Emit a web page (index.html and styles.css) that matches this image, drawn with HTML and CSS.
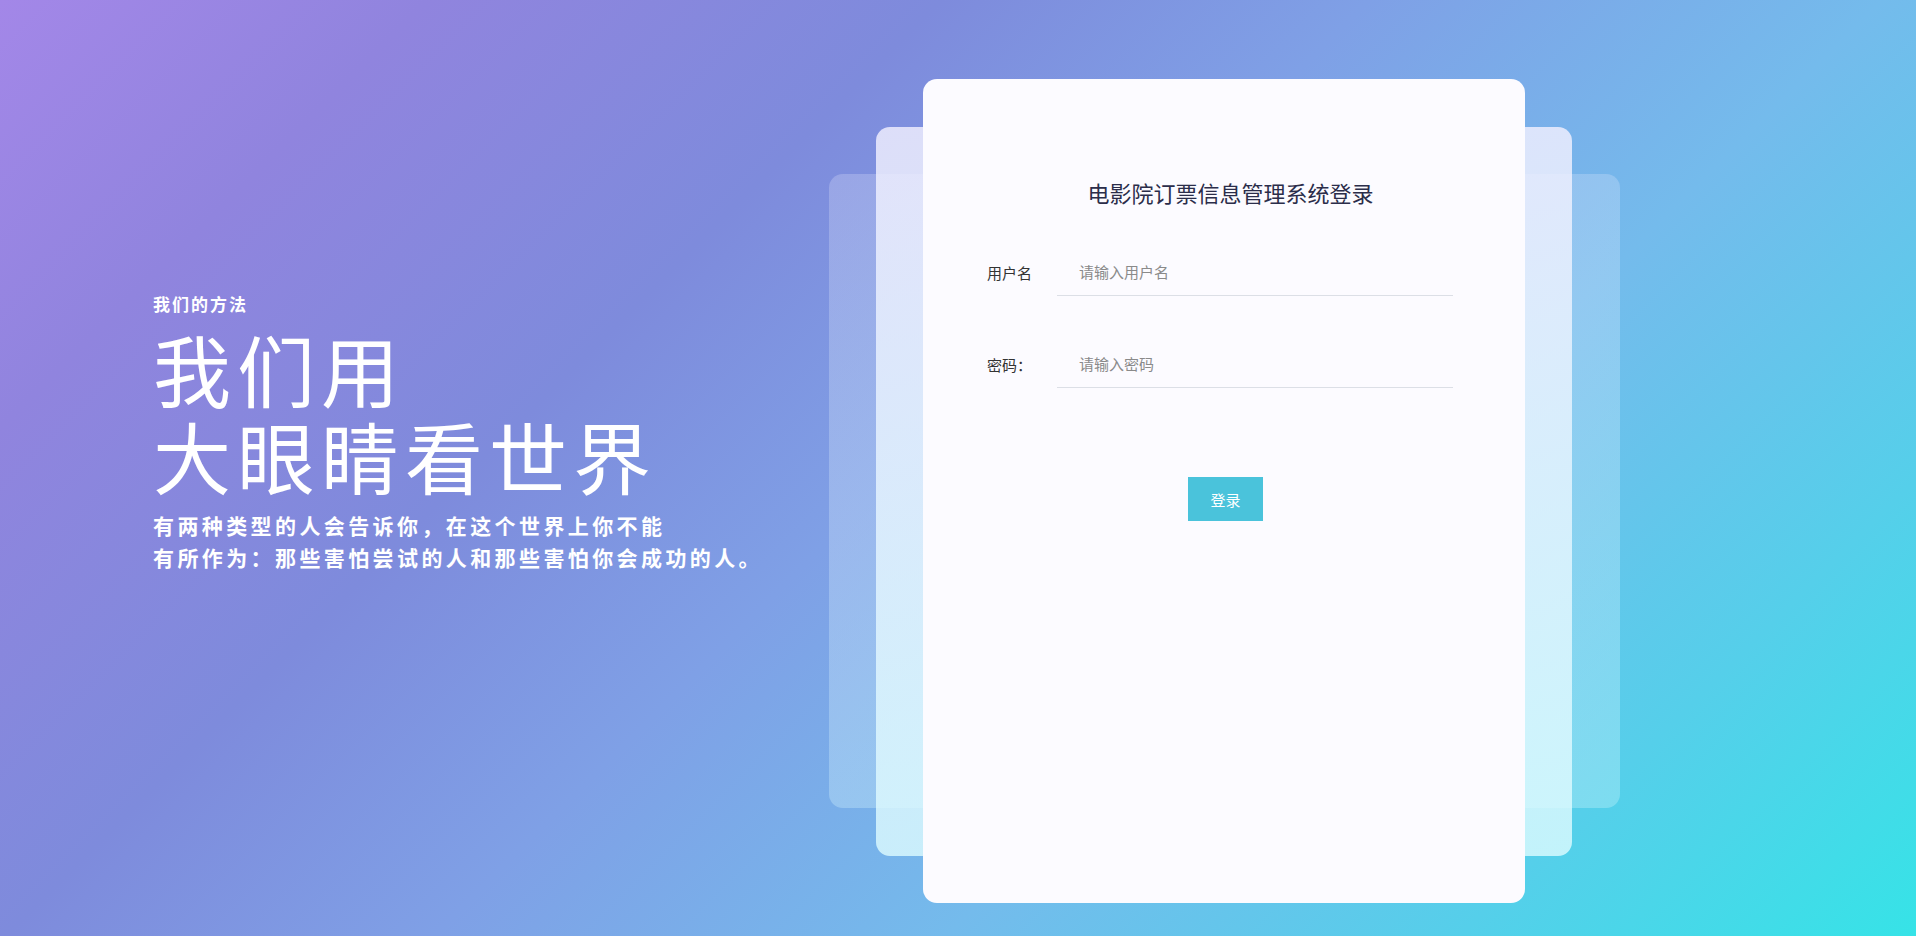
FILE: index.html
```html
<!DOCTYPE html>
<html lang="zh-CN">
<head>
<meta charset="utf-8">
<title>电影院订票信息管理系统登录</title>
<link rel="stylesheet" href="styles.css">
</head>
<body>
<div class="page">
  <section class="intro">
    <p class="eyebrow">我们的方法</p>
    <h1 class="headline">我们用<br>大眼睛看世界</h1>
    <p class="lead">有两种类型的人会告诉你，在这个世界上你不能<br>有所作为：那些害怕尝试的人和那些害怕你会成功的人。</p>
  </section>
  <section class="stage">
    <div class="sheet sheet-back"></div>
    <div class="sheet sheet-mid"></div>
    <div class="card">
      <h2 class="card-title">电影院订票信息管理系统登录</h2>
      <form class="form">
        <label class="row"><span class="label">用户名</span><input class="field" type="text" placeholder="请输入用户名"></label>
        <label class="row"><span class="label">密码：</span><input class="field" type="password" placeholder="请输入密码"></label>
        <div class="actions"><button class="btn" type="button">登录</button></div>
      </form>
    </div>
  </section>
</div>
</body>
</html>
```

FILE: styles.css
```css
* {
  box-sizing: border-box;
  margin: 0;
  padding: 0;
}

html,
body {
  height: 100%;
}

body {
  font-family: "Noto Sans CJK SC", "Noto Sans", sans-serif;
  background: linear-gradient(135deg, #a387e8 0%, #9084de 15%, #7e8bdc 33%, #7fa0e6 48%, #74bbec 66%, #55cfea 84%, #36e3e7 100%);
  overflow: hidden;
}

.page {
  display: grid;
  grid-template-columns: 828px 792px 1fr;
  height: 936px;
}

.intro {
  padding: 292px 0 0 153px;
  color: #fff;
}

.eyebrow {
  font-size: 17px;
  line-height: 24px;
  font-weight: 700;
  letter-spacing: 2px;
}

.headline {
  margin-top: 9px;
  font-size: 78px;
  line-height: 87px;
  font-weight: 400;
  letter-spacing: 6px;
  white-space: nowrap;
}

.lead {
  margin-top: 10px;
  font-size: 21px;
  line-height: 32px;
  font-weight: 700;
  letter-spacing: 3.4px;
  white-space: nowrap;
}

.stage {
  display: grid;
  padding-top: 79px;
  align-content: start;
}

.stage > * {
  grid-area: 1 / 1;
  justify-self: center;
  align-self: center;
}

.sheet {
  border-radius: 14px;
}

.sheet-back {
  width: 791px;
  height: 634px;
  background: linear-gradient(180deg, rgba(240, 240, 255, 0.24), rgba(220, 250, 255, 0.3));
}

.sheet-mid {
  width: 696px;
  height: 729px;
  background: linear-gradient(180deg, rgba(242, 240, 255, 0.82), rgba(222, 252, 255, 0.8));
}

.card {
  width: 602px;
  height: 824px;
  background: #fcfbff;
  border-radius: 14px;
  padding: 98px 72px 0 64px;
}

.card-title {
  font-size: 22px;
  line-height: 30px;
  font-weight: 400;
  color: #2b2d4a;
  text-align: center;
  padding-left: 21px;
}

.form {
  margin-top: 41px;
}

.row {
  display: flex;
  align-items: center;
  height: 48px;
}

.row + .row {
  margin-top: 44px;
}

.label {
  flex: none;
  width: 70px;
  font-size: 15px;
  color: #333;
}

.field {
  flex: 1;
  min-width: 0;
  height: 48px;
  border: 0;
  border-bottom: 1px solid #dcdfe6;
  background: transparent;
  padding: 0 0 0 22px;
  font: 15px "Noto Sans CJK SC", "Noto Sans", sans-serif;
  color: #303133;
  outline: none;
}

.field::placeholder {
  color: #8a8a8a;
}

.actions {
  display: flex;
  justify-content: center;
  padding-left: 11px;
  margin-top: 89px;
}

.btn {
  width: 75px;
  height: 44px;
  border: 0;
  background: #4ac3db;
  color: #fff;
  font: 15px "Noto Sans CJK SC", "Noto Sans", sans-serif;
  cursor: pointer;
}
```
